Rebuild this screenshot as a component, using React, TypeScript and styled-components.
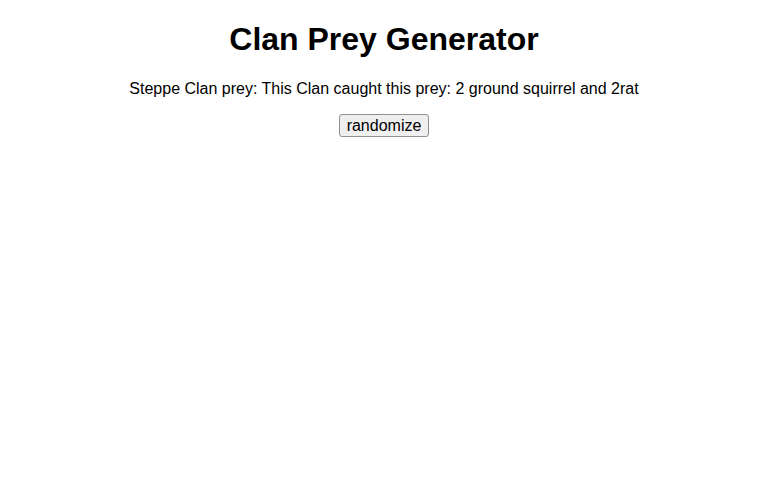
import React, { useState } from 'react';
import styled, { createGlobalStyle } from 'styled-components';

const GlobalStyle = createGlobalStyle`
  body {
    margin: 0;
    background: #fff;
    font-family: "Liberation Sans", Arial, sans-serif;
  }
`;

const Page = styled.div`
  text-align: center;
  color: #000;
`;

const Title = styled.h1`
  font-size: 32px;
  font-weight: bold;
  margin: 21.44px 0;
`;

const Result = styled.p`
  font-size: 16px;
  margin: 16px 0;
`;

const RandomButton = styled.button`
  font-family: "Liberation Sans", Arial, sans-serif;
  font-size: 16px;
  line-height: 19px;
  color: #000;
  background: #efefef;
  border: 1px solid #8f8f8f;
  border-radius: 3px;
  padding: 1px 7px 1px;
`;

const App = () => {
  const [prey] = useState('2 ground squirrel and 2rat');
  return (
    <Page>
      <GlobalStyle />
      <Title>Clan Prey Generator</Title>
      <Result>Steppe Clan prey: This Clan caught this prey: {prey}</Result>
      <RandomButton>randomize</RandomButton>
    </Page>
  );
};

export default App;
